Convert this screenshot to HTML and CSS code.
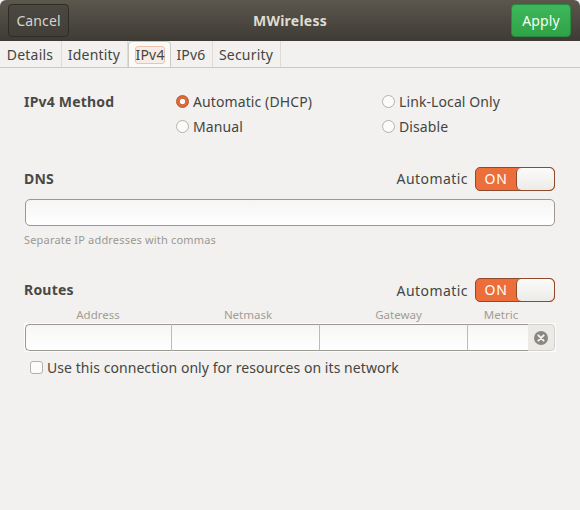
FILE: index.html
```html
<!DOCTYPE html>
<html lang="en">
<head>
<meta charset="utf-8">
<title>MWireless</title>
<link rel="stylesheet" href="styles.css">
</head>
<body>
<div class="window">
  <header class="titlebar">
    <button class="hbtn cancel">Cancel</button>
    <div class="title">MWireless</div>
    <button class="hbtn apply">Apply</button>
  </header>
  <nav class="tabs">
    <div class="tab t1">Details</div>
    <div class="tab t2">Identity</div>
    <div class="tab t3 active"><span class="focus">IPv4</span></div>
    <div class="tab t4">IPv6</div>
    <div class="tab t5">Security</div>
  </nav>
  <main class="form">
    <section class="method">
      <div class="label method-label">IPv4 Method</div>
      <div class="opts">
        <div class="opt"><span class="radio on"></span>Automatic (DHCP)</div>
        <div class="opt"><span class="radio"></span>Link-Local Only</div>
        <div class="opt"><span class="radio"></span>Manual</div>
        <div class="opt"><span class="radio"></span>Disable</div>
      </div>
    </section>
    <section class="dns">
      <div class="head">
        <div class="label">DNS</div>
        <div class="auto">Automatic</div>
        <div class="switch"><span class="on-text">ON</span><span class="knob"></span></div>
      </div>
      <div class="entry"></div>
      <div class="caption">Separate IP addresses with commas</div>
    </section>
    <section class="routes">
      <div class="head">
        <div class="label">Routes</div>
        <div class="auto">Automatic</div>
        <div class="switch"><span class="on-text">ON</span><span class="knob"></span></div>
      </div>
      <div class="cols">
        <span class="h1">Address</span><span class="h2">Netmask</span><span class="h3">Gateway</span><span class="h4">Metric</span>
      </div>
      <div class="route-row">
        <div class="cell c1"></div><div class="cell c2"></div><div class="cell c3"></div><div class="cell c4"></div>
        <div class="del">
          <svg width="16" height="16" viewBox="0 0 16 16"><circle cx="8" cy="8" r="7" fill="#8a8780"/><path d="M5.4 5.4l5.2 5.2M10.6 5.4l-5.2 5.2" stroke="#f2f1ef" stroke-width="2" stroke-linecap="round"/></svg>
        </div>
      </div>
      <div class="check-row"><span class="check"></span>Use this connection only for resources on its network</div>
    </section>
  </main>
</div>
</body>
</html>
```
FILE: styles.css
```css
* { box-sizing: border-box; }
html, body { margin: 0; height: 100%; background: #f2f1ef; }
body { font-family: "Noto Sans", sans-serif; font-size: 14px; color: #3d3c38; overflow: hidden; }
.window { width: 580px; height: 510px; background: #f2f1ef; }

.titlebar { height: 41px; padding: 4px 9px 4px 8px; display: flex; align-items: center; justify-content: space-between; background: linear-gradient(#5b574d, #3e3b35); border-radius: 6px 6px 0 0; }
.hbtn { height: 33px; font: inherit; font-size: 14px; border-radius: 4px; padding: 0; letter-spacing: 0.1px; }
.cancel { width: 61px; color: #d6d4cf; background: linear-gradient(#4b4841, #423f38); border: 1px solid #2e2c27; }
.apply { width: 60px; color: #f4fbf4; background: linear-gradient(#3cb85a, #2fa347); border: 1px solid #2a8a3e; }
.title { font-weight: 700; font-size: 14px; color: #dfdbd2; letter-spacing: 0.25px; }

.tabs { height: 27px; display: flex; border-bottom: 1px solid #cdc9c3; background: #f2f1ef; }
.tab { height: 26px; display: flex; align-items: center; justify-content: center; border-right: 1px solid #dedbd7; font-size: 14px; color: #46453f; letter-spacing: 0.2px; padding-right: 1px; }
.t1 { width: 62px; }
.t2 { width: 66px; }
.t3 { width: 43px; }
.t4 { width: 42px; }
.t5 { width: 68px; }
.active { background: #fafaf9; border: 1px solid #cdc9c3; border-bottom: 0; border-radius: 4px 4px 0 0; padding-right: 0; }
.focus { height: 18px; line-height: 16px; width: 30px; text-align: center; border: 1px solid #f0c2ab; border-radius: 3px; background: #f8ece6; margin-top: 1px; }

.form { padding: 0 25px 0 24px; }
.label { font-weight: 700; font-size: 14px; color: #4a4945; letter-spacing: 0.2px; }
.method { display: flex; padding-top: 21px; height: 86px; }
.method-label { width: 152px; height: 25px; line-height: 25px; }
.opts { display: grid; grid-template-columns: 206px 1fr; grid-auto-rows: 25px; }
.opt { display: flex; align-items: center; font-size: 14px; letter-spacing: 0.1px; color: #46453f; }
.radio { width: 13px; height: 13px; margin-right: 4px; border-radius: 50%; border: 1px solid #b5b1aa; background: #fbfbfa; display: block; }
.radio.on { background: radial-gradient(circle, #fff 0 2.4px, #dd6a38 3px); border-color: #b9532a; }

.head { height: 26px; display: flex; align-items: center; }
.head .label { flex: 1; }
.auto { margin-right: 7px; font-size: 14px; color: #46453f; letter-spacing: 0.45px; }
.switch { width: 80px; height: 24px; display: flex; border: 1px solid #8f4a2c; border-radius: 5px; background: #ec6e3a; color: #fff; overflow: hidden; }
.on-text { width: 40px; text-align: center; line-height: 22px; font-size: 14px; letter-spacing: 0.6px; }
.knob { flex: 1; background: linear-gradient(#fbfbfa, #ecebe8); border-left: 1px solid #8f4a2c; border-radius: 5px; }
.dns .switch { margin-top: 2px; }
.routes .label { padding-bottom: 2px; }

.dns { padding-top: 11px; height: 117px; }
.entry { margin-top: 8px; margin-left: 1px; height: 27px; border: 1px solid #9b9892; border-radius: 5px; background: linear-gradient(#f5f5f4, #fff); }
.caption { margin-top: 6px; font-size: 11px; line-height: 16px; color: #9b9892; letter-spacing: 0.18px; }

.routes { padding-top: 6px; }
.cols { display: flex; margin: 4px 0 0 1px; height: 16px; line-height: 16px; font-size: 11.5px; color: #a09d97; text-align: center; }
.h1 { width: 146px; }
.h2 { width: 154px; }
.h3 { width: 147px; }
.h4 { width: 58px; }
.route-row { display: flex; margin-left: 1px; margin-top: 1px; height: 27px; width: 530px; box-shadow: 0 0 0 1px #fcfcfb; }
.cell { height: 27px; border-top: 1px solid #9b9892; border-bottom: 1px solid #9b9892; border-right: 1px solid #bdbab4; background: linear-gradient(#f6f6f5, #fff); }
.c1 { width: 147px; border-left: 1px solid #9b9892; border-radius: 5px 0 0 5px; }
.c2 { width: 148px; }
.c3 { width: 148px; }
.c4 { width: 60px; border-right: 0; }
.del { width: 27px; height: 27px; display: flex; align-items: center; justify-content: center; background: #ebeae7; border: 1px solid #d3d0cb; border-left: 0; border-radius: 0 5px 5px 0; }
.check-row { margin: 7px 0 0 6px; height: 18px; display: flex; align-items: center; font-size: 14px; color: #46453f; letter-spacing: 0.06px; }
.check { width: 13px; height: 13px; margin-right: 4px; border: 1px solid #b5b1aa; border-radius: 3px; background: #fbfbfa; display: block; }
```
